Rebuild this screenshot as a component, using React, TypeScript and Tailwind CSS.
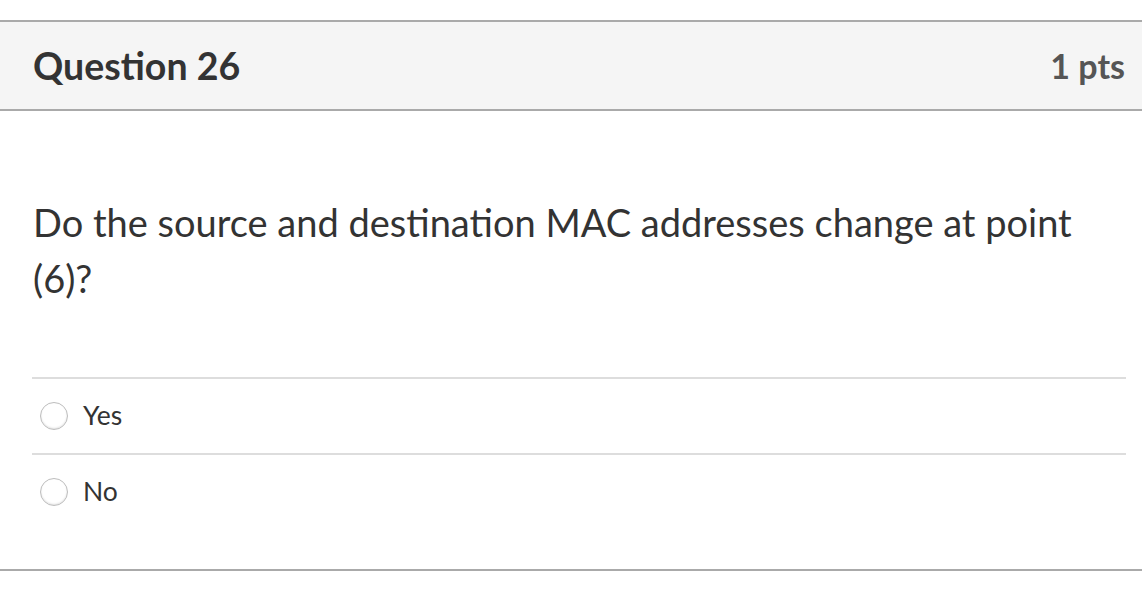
import React from "react";

function Radio() {
  return (
    <span className="w-[28px] h-[28px] rounded-full border-[1.5px] border-[#bdbdbd] bg-white shrink-0 shadow-[inset_0_-1px_2px_rgba(0,0,0,0.12)]" />
  );
}

export default function App() {
  return (
    <div className="w-[1142px] h-[590px] bg-white pt-[20px]" style={{ fontFamily: "Lato, 'Noto Sans', sans-serif" }}>
      <div className="border-t-[2px] border-b-[2px] border-[#aaaaaa] bg-[#f5f5f5] h-[91px] flex items-center justify-between pl-[33px] pr-[17px]">
        <div className="text-[37.5px] font-bold text-[#333333] leading-none">Question 26</div>
        <div className="text-[34px] font-bold text-[#555555] leading-none">1 pts</div>
      </div>
      <div className="pl-[33px] pr-[16px] pt-[83px]">
        <p className="text-[38px] leading-[56px] text-[#333333]">
          Do the source and destination MAC addresses change at point (6)?
        </p>
      </div>
      <div className="pl-[32px] pr-[16px] mt-[71px]">
        <div className="border-t-[2px] border-[#dddddd] h-[76px] flex items-center gap-[15px] pl-[8px]">
          <Radio />
          <span className="text-[26.5px] text-[#333333]">Yes</span>
        </div>
        <div className="border-t-[2px] border-[#dddddd] h-[76px] flex items-center gap-[15px] pl-[8px]">
          <Radio />
          <span className="text-[26.5px] text-[#333333]">No</span>
        </div>
      </div>
      <div className="mt-[40px] border-t-[2px] border-[#aaaaaa]" />
    </div>
  );
}
